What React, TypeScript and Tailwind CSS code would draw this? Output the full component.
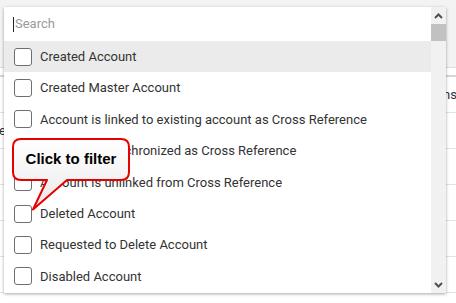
import React from "react";

const items = [
  "Created Account",
  "Created Master Account",
  "Account is linked to existing account as Cross Reference",
  "Account is synchronized as Cross Reference",
  "Account is unlinked from Cross Reference",
  "Deleted Account",
  "Requested to Delete Account",
  "Disabled Account",
];

function Chevron({ up }: { up?: boolean }) {
  return (
    <svg width="9" height="6" viewBox="0 0 9 6">
      <path
        d={up ? "M1 5 L4.5 1.5 L8 5" : "M1 1 L4.5 4.5 L8 1"}
        fill="none"
        stroke="#505050"
        strokeWidth="2"
      />
    </svg>
  );
}

export default function App() {
  return (
    <div
      className="relative w-[456px] h-[303px] overflow-hidden bg-white"
      style={{ fontFamily: "Roboto, 'Liberation Sans', sans-serif" }}
    >
      {/* background page */}
      <div className="flex flex-col">
        <div className="h-[68px] bg-[#f3f3f3] border-b border-[#dedede]" />
        <div className="h-[9px] bg-white border-b-2 border-[#d6d6d6]" />
        <div className="h-[36px] flex items-center border-b border-[#e2e2e2] text-[13px] text-[#333]">
          <div className="w-[443px] shrink-0" />
          <span>ns</span>
        </div>
        <div className="h-[36px] flex items-center border-b border-[#e2e2e2] text-[13px] text-[#333]">
          <span className="-ml-[1px]">e</span>
        </div>
        <div className="h-[36px] border-b border-[#e2e2e2]" />
        <div className="h-[36px] border-b border-[#e2e2e2]" />
        <div className="h-[36px] border-b border-[#e2e2e2]" />
        <div className="h-[36px] border-b border-[#e2e2e2]" />
      </div>

      {/* dropdown popup */}
      <div className="absolute left-[4px] top-[7px] w-[442px] h-[286px] bg-white flex shadow-[0_1px_3px_rgba(0,0,0,0.35)]">
        <div className="flex-1 flex flex-col">
          <div className="h-[34px] flex items-center pl-[9px] text-[13px]">
            <span className="w-[1px] h-[15px] bg-[#222] mr-[1px]" />
            <span className="text-[#9a9a9a]">Search</span>
          </div>
          {items.map((t, i) => (
            <div
              key={t}
              className={
                "h-[31.4px] flex items-center pl-[10px] gap-[8px] text-[13px] text-[#333] whitespace-nowrap " +
                (i === 0 ? "bg-[#ebebeb]" : "")
              }
            >
              <span className="w-[18px] h-[18px] shrink-0 rounded-[3px] border-[1.5px] border-[#6e6e6e] bg-white" />
              <span>{t}</span>
            </div>
          ))}
        </div>
        <div className="w-[15px] bg-[#f1f1f1] flex flex-col">
          <div className="h-[17px] flex items-center justify-center">
            <Chevron up />
          </div>
          <div className="h-[17px] bg-[#c1c1c1]" />
          <div className="flex-1" />
          <div className="h-[17px] flex items-center justify-center">
            <Chevron />
          </div>
        </div>
      </div>

      {/* callout */}
      <svg
        className="absolute left-[10px] top-[136px]"
        width="124"
        height="78"
        viewBox="0 0 124 78"
      >
        <defs>
          <linearGradient id="cg" x1="0" y1="0" x2="0" y2="1">
            <stop offset="0" stopColor="#ffffff" />
            <stop offset="1" stopColor="#e9e9e9" />
          </linearGradient>
        </defs>
        <path
          d="M11 3 H111 Q119 3 119 11 V36 Q119 44 111 44 H57 L23 73.5 L37 44 H11 Q3 44 3 36 V11 Q3 3 11 3 Z"
          fill="url(#cg)"
          stroke="#e60000"
          strokeWidth="2"
          strokeLinejoin="round"
        />
      </svg>
      <div
        className="absolute left-[13px] top-[139px] w-[116px] h-[41px] flex items-center justify-center text-[15px] font-bold text-black"
        style={{ fontFamily: "'Liberation Sans', Arial, sans-serif" }}
      >
        Click to filter
      </div>
    </div>
  );
}
